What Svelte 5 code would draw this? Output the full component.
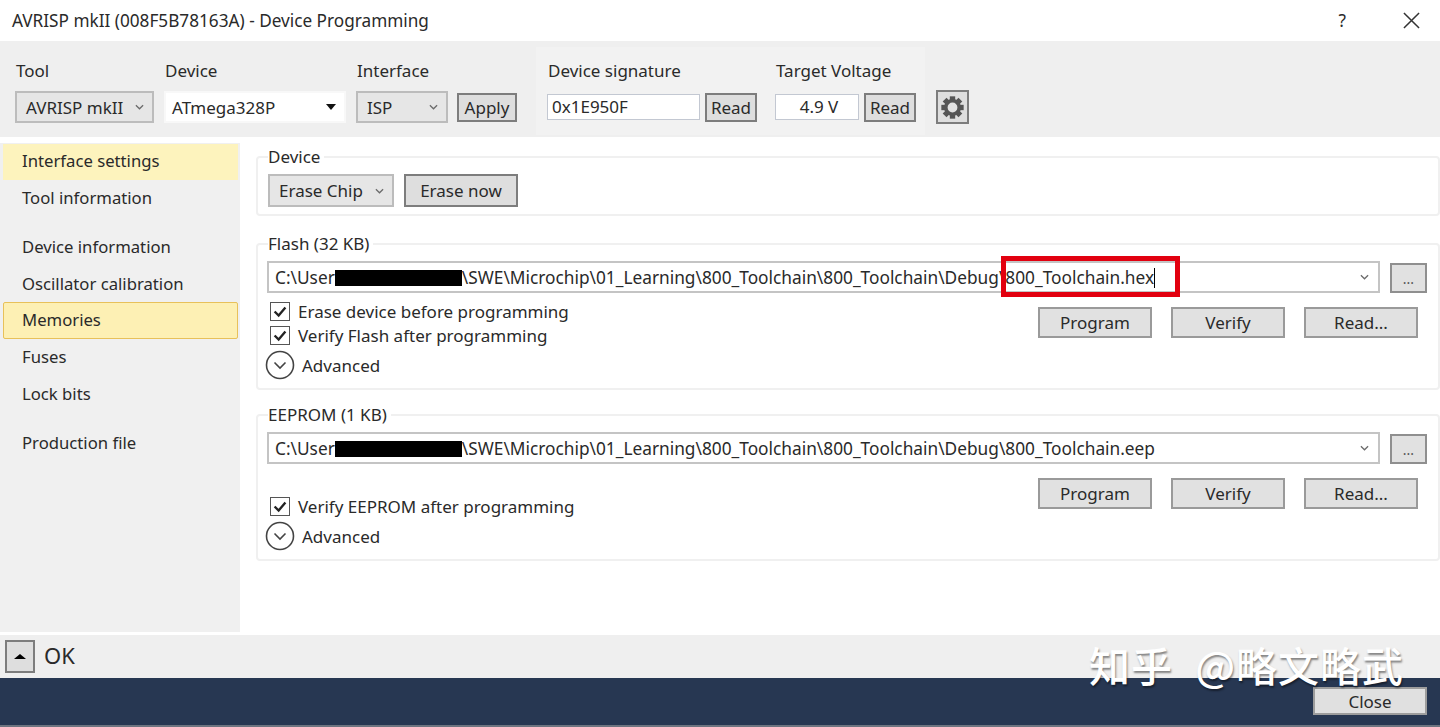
<script lang="ts">
  const navTop = [{ label: 'Interface settings', active: 'plain' }, { label: 'Tool information' }]
  const navMid = [
    { label: 'Device information' },
    { label: 'Oscillator calibration' },
    { label: 'Memories', active: 'boxed' },
    { label: 'Fuses' },
    { label: 'Lock bits' }
  ]
  const teeth = [0, 45, 90, 135, 180, 225, 270, 315]
  const tail = '\\SWE\\Microchip\\01_Learning\\800_Toolchain\\800_Toolchain\\Debug\\'
</script>

{#snippet chevron()}
  <svg class="chev" viewBox="0 0 10 6" aria-hidden="true"><path d="M1 1l4 4 4-4" /></svg>
{/snippet}

{#snippet advanced()}
  <div class="advanced">
    <svg viewBox="0 0 30 30" aria-hidden="true">
      <circle cx="15" cy="15" r="13.5" />
      <path d="M9.5 12.5l5.5 5.5 5.5-5.5" />
    </svg>
    <span>Advanced</span>
  </div>
{/snippet}

{#snippet check(label: string)}
  <label class="check">
    <span class="box">
      <svg viewBox="0 0 20 18" aria-hidden="true"><path d="M4 9l4.5 4.5L16 4.5" /></svg>
    </span>
    {label}
  </label>
{/snippet}

{#snippet actions()}
  <div class="actions">
    <button>Program</button>
    <button>Verify</button>
    <button>Read...</button>
  </div>
{/snippet}

<div class="window">
  <header class="titlebar">
    <span>AVRISP mkII (008F5B78163A) - Device Programming</span>
    <div class="win-btns">
      <span class="help">?</span>
      <svg viewBox="0 0 18 18" aria-hidden="true"><path d="M1 1l16 16M17 1L1 17" /></svg>
    </div>
  </header>

  <section class="toolbar">
    <div class="tool-left">
      <div class="field">
        <span>Tool</span>
        <div class="combo w-tool">AVRISP mkII {@render chevron()}</div>
      </div>
      <div class="field">
        <span>Device</span>
        <div class="combo white w-device">ATmega328P <i class="caret"></i></div>
      </div>
      <div class="field">
        <span>Interface</span>
        <div class="row-apply">
          <div class="combo w-iface">ISP {@render chevron()}</div>
          <button class="strong apply">Apply</button>
        </div>
      </div>
    </div>
    <div class="tool-right">
      <div class="field">
        <span>Device signature</span>
        <div class="row-read">
          <div class="input w-sig">0x1E950F</div>
          <button class="strong read">Read</button>
        </div>
      </div>
      <div class="field">
        <span>Target Voltage</span>
        <div class="row-read">
          <div class="input w-volt">4.9 V</div>
          <button class="strong read">Read</button>
        </div>
      </div>
    </div>
    <button class="strong gear" aria-label="Settings">
      <svg viewBox="0 0 28 28" aria-hidden="true">
        {#each teeth as a}
          <rect x="11" y="1.5" width="6" height="6" transform={`rotate(${a} 14 14)`} />
        {/each}
        <circle cx="14" cy="14" r="7.5" />
      </svg>
    </button>
  </section>

  <div class="body">
    <nav class="sidebar">
      {#each navTop as item}
        <div class="nav-item" class:sel={item.active === 'plain'}>{item.label}</div>
      {/each}
      <div class="nav-gap"></div>
      {#each navMid as item}
        <div class="nav-item" class:sel-box={item.active === 'boxed'}>{item.label}</div>
      {/each}
      <div class="nav-gap"></div>
      <div class="nav-item">Production file</div>
    </nav>

    <main class="content">
      <fieldset class="device">
        <legend>Device</legend>
        <div class="device-row">
          <div class="combo w-erase">Erase Chip {@render chevron()}</div>
          <button class="strong erase">Erase now</button>
        </div>
      </fieldset>

      <fieldset class="flash">
        <legend>Flash (32 KB)</legend>
        <div class="path-row">
          <div class="path">
            <span class="path-text">C:\User<i class="blackout"></i>{tail}800_Toolchain.hex<i class="cursor"></i></span>
            {@render chevron()}
            <div class="highlight"></div>
          </div>
          <button class="browse">...</button>
        </div>
        <div class="under">
          <div class="checks">
            {@render check('Erase device before programming')}
            {@render check('Verify Flash after programming')}
            {@render advanced()}
          </div>
          {@render actions()}
        </div>
      </fieldset>

      <fieldset class="eeprom">
        <legend>EEPROM (1 KB)</legend>
        <div class="path-row">
          <div class="path">
            <span class="path-text">C:\User<i class="blackout"></i>{tail}800_Toolchain.eep</span>
            {@render chevron()}
          </div>
          <button class="browse">...</button>
        </div>
        <div class="under">
          <div class="checks eep-checks">
            {@render check('Verify EEPROM after programming')}
            {@render advanced()}
          </div>
          {@render actions()}
        </div>
      </fieldset>
    </main>
  </div>

  <section class="status">
    <button class="strong expand" aria-label="Expand"><i></i></button>
    <span>OK</span>
  </section>

  <footer class="footer">
    <button class="close">Close</button>
  </footer>

  <div class="watermark">知乎 @略文略武</div>
</div>

<style>
  :global(body) {
    margin: 0;
    background: #fff;
  }

  .window {
    position: relative;
    display: flex;
    flex-direction: column;
    width: 1440px;
    height: 727px;
    overflow: hidden;
    color: #2a2a2a;
    font-family: 'Noto Sans', 'Open Sans', sans-serif;
    font-size: 17px;
  }

  button {
    box-sizing: border-box;
    margin: 0;
    padding: 0;
    border: 2px solid #a3a3a3;
    background: #e1e1e1;
    color: #2a2a2a;
    font: inherit;
  }

  .titlebar {
    display: flex;
    flex: 0 0 41px;
    align-items: center;
    justify-content: space-between;
    padding: 0 20px 0 12px;
    box-sizing: border-box;
    background: #fff;
    font-size: 17.2px;
  }

  .win-btns {
    display: flex;
    align-items: center;
    gap: 57px;
  }

  .win-btns svg {
    width: 17px;
    height: 17px;
    fill: none;
    stroke: #333;
    stroke-width: 1.6;
  }

  .toolbar {
    display: flex;
    flex: 0 0 96px;
    box-sizing: border-box;
    align-items: flex-start;
    background: #efefef;
  }

  .tool-left {
    display: flex;
    gap: 10px;
    padding: 17px 0 0 15px;
    width: 536px;
    box-sizing: border-box;
  }

  .tool-right {
    display: flex;
    gap: 18px;
    box-sizing: border-box;
    width: 389px;
    height: 88px;
    margin-top: 6px;
    padding: 11px 0 0 11px;
    background: #f2f2f2;
  }

  .field {
    display: flex;
    flex-direction: column;
    gap: 8px;
  }

  .field > span {
    padding-left: 1px;
    line-height: 25px;
  }

  .combo {
    display: flex;
    align-items: center;
    justify-content: space-between;
    box-sizing: border-box;
    height: 32px;
    padding: 0 8px 0 9px;
    border: 2px solid #bcbcbc;
    background: #e6e6e6;
  }

  .combo.white {
    padding-left: 6px;
    border-color: #f8f8f8;
    background: #fff;
  }

  .w-tool { width: 139px; }
  .w-device { width: 182px; }
  .w-iface { width: 92px; }
  .w-erase { width: 126px; }

  .chev {
    flex: none;
    width: 9px;
    height: 6px;
    fill: none;
    stroke: #6b6b6b;
    stroke-width: 1.4;
  }

  .caret {
    border: solid transparent;
    border-width: 6px 5px 0;
    border-top-color: #111;
  }

  .row-apply {
    display: flex;
    align-items: center;
    gap: 9px;
  }

  .row-read {
    display: flex;
    align-items: center;
    gap: 5px;
    height: 32px;
  }

  button.strong {
    border-color: #7d7d7d;
    background: #dedede;
  }

  .apply {
    width: 60px;
    height: 29px;
  }

  .read {
    width: 52px;
    height: 29px;
  }

  .input {
    box-sizing: border-box;
    height: 26px;
    padding-left: 4px;
    border: 1.5px solid #c3c8d2;
    background: #fff;
    line-height: 23px;
  }

  .w-sig { width: 153px; }
  .w-volt { width: 84px; text-align: center; }

  .gear {
    display: flex;
    align-items: center;
    justify-content: center;
    width: 33px;
    height: 34px;
    margin: 49px 0 0 11px;
  }

  .gear svg {
    width: 25px;
    height: 25px;
    fill: #555;
  }

  .gear circle {
    fill: #e1e1e1;
    stroke: #555;
    stroke-width: 4;
  }

  .body {
    display: flex;
    flex: 0 0 495px;
    background: #fff;
  }

  .sidebar {
    flex: 0 0 240px;
    box-sizing: border-box;
    margin-top: 6px;
    padding: 1px 2px 0 3px;
    background: #f0f0f0;
    font-size: 16.7px;
  }

  .nav-item {
    box-sizing: border-box;
    height: 37px;
    padding-left: 19px;
    line-height: 35px;
    white-space: nowrap;
  }

  .nav-item.sel {
    height: 36px;
    line-height: 34px;
    background: #fdf3bd;
  }

  .nav-item.sel-box {
    margin-top: -1px;
    border: 1px solid #e8c15a;
    border-radius: 2px;
    background: #fdf0b4;
    padding-left: 18px;
    line-height: 33px;
  }

  .nav-gap {
    height: 12px;
  }

  .content {
    flex: 1;
    box-sizing: border-box;
    padding: 8px 7px 0 16px;
  }

  fieldset {
    box-sizing: border-box;
    margin: 0 0 16px;
    padding: 0 11px 0 9px;
    min-width: 0;
    border: 2px solid #f0f0f0;
    border-radius: 4px;
  }

  legend {
    margin-left: 1px;
    padding: 0 4px 0 0;
    line-height: 24px;
  }

  .device {
    height: 71px;
  }

  .device-row {
    display: flex;
    gap: 10px;
    margin-top: 5px;
    margin-left: 1px;
  }

  .erase {
    width: 114px;
    height: 33px;
  }

  .device-row .combo {
    height: 33px;
  }

  .flash {
    height: 158px;
    margin-bottom: 13px;
  }

  .eeprom {
    height: 158px;
  }

  .path-row {
    display: flex;
    align-items: flex-end;
    gap: 10px;
    margin-top: 5px;
  }

  .path {
    position: relative;
    display: flex;
    flex: 0 0 1113px;
    align-items: center;
    justify-content: space-between;
    box-sizing: border-box;
    height: 32px;
    padding: 0 9px 0 6px;
    border: 2px solid #c4c4c4;
    background: #fff;
  }

  .path-text {
    font-size: 17.3px;
    white-space: nowrap;
  }

  .blackout {
    display: inline-block;
    width: 127px;
    height: 16px;
    margin-bottom: -2px;
    background: #000;
  }

  .cursor {
    display: inline-block;
    width: 1px;
    height: 20px;
    margin-bottom: -4px;
    background: #000;
  }

  .highlight {
    position: absolute;
    top: -7px;
    left: 732px;
    width: 179px;
    height: 41px;
    box-sizing: border-box;
    border: 5px solid #e2000f;
  }

  .browse {
    width: 37px;
    height: 30px;
    border-color: #8f8f8f;
    color: #555;
    font-size: 14px;
  }

  .under {
    display: flex;
    justify-content: space-between;
    padding-right: 9px;
    margin-top: 6px;
  }

  .checks {
    display: flex;
    flex-direction: column;
  }

  .eep-checks {
    padding-top: 24px;
  }

  .check {
    display: flex;
    align-items: center;
    gap: 8px;
    height: 24px;
    padding-left: 3px;
  }

  .box {
    display: flex;
    box-sizing: border-box;
    width: 20px;
    height: 19px;
    border: 1.5px solid #555;
    background: #fff;
  }

  .box svg {
    width: 100%;
    height: 100%;
    fill: none;
    stroke: #222;
    stroke-width: 2.6;
  }

  .advanced {
    display: flex;
    align-items: center;
    gap: 7px;
    height: 30px;
    margin: 3px 0 0 -2px;
  }

  .advanced svg {
    width: 30px;
    height: 30px;
    fill: none;
    stroke: #444;
    stroke-width: 1.6;
  }

  .actions {
    display: flex;
    gap: 19px;
    padding-top: 8px;
  }

  .actions button {
    width: 114px;
    height: 31px;
    border-color: #9a9a9a;
  }

  .status {
    display: flex;
    flex: 0 0 43px;
    align-items: center;
    gap: 9px;
    box-sizing: border-box;
    margin-top: 3px;
    padding-left: 5px;
    background: #efefef;
    font-size: 22px;
  }

  .status span {
    margin-top: -3px;
  }

  .expand {
    display: flex;
    align-items: center;
    justify-content: center;
    width: 30px;
    height: 33px;
  }

  .expand i {
    border: solid transparent;
    border-width: 0 6px 5px;
    border-bottom-color: #000;
  }

  .footer {
    display: flex;
    flex: 1;
    justify-content: flex-end;
    padding: 9px 13px 0 0;
    border-bottom: 2px solid #6d7480;
    background: #273752;
  }

  .close {
    width: 114px;
    height: 28px;
    border-color: #9d9d9d;
    background: #e0e0e0;
  }

  .watermark {
    position: absolute;
    top: 642px;
    left: 1089px;
    color: #fff;
    font-family: 'Noto Sans CJK SC', sans-serif;
    font-size: 41px;
    font-weight: 500;
    letter-spacing: 1px;
    word-spacing: 12px;
    line-height: 44px;
    white-space: nowrap;
    text-shadow: 1px 2px 2px rgba(0, 0, 0, 0.45);
  }
</style>
